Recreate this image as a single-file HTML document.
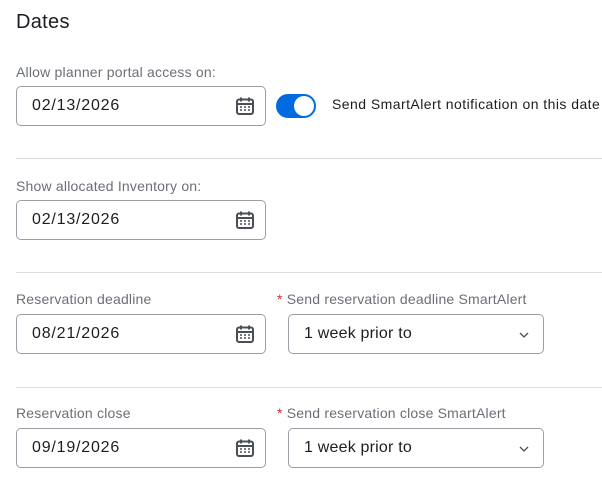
<!DOCTYPE html><html><head><style>
body{margin:0;width:602px;height:486px;background:#fff;font-family:"Liberation Sans",sans-serif;position:relative;overflow:hidden;color:#1a1d21}
.a{position:absolute}
h1{position:absolute;left:16px;top:11px;margin:0;font-size:20px;font-weight:400;color:#1a1d21;letter-spacing:0.3px}
.lbl{position:absolute;font-size:14px;color:#6b6f76;letter-spacing:0.2px}
.in{position:absolute;width:248px;height:38px;border:1px solid #9a9ea5;border-radius:5px;box-sizing:content-box}
.in span{position:absolute;left:15px;top:10px;font-size:16px;letter-spacing:0.8px}
.in svg{position:absolute;right:10px;top:9px}
.sel{position:absolute;width:254px;height:38px;border:1px solid #9a9ea5;border-radius:5px}
.sel span{position:absolute;left:15px;top:10px;font-size:16px;letter-spacing:0.2px}
.sel svg{position:absolute;right:14px;top:17px}
.hr{position:absolute;left:16px;width:586px;height:1px;background:#dcdee2}
.st{color:#d0312d;font-size:14px}
</style></head><body>
<h1>Dates</h1>
<div class="lbl" style="left:16px;top:64px">Allow planner portal access on:</div>
<div class="in" style="left:16px;top:86px"><span>02/13/2026</span><svg width="20" height="20" viewBox="0 0 20 20"><rect x="2" y="3.5" width="16" height="14.5" rx="2" fill="none" stroke="#4a4e55" stroke-width="2"/><path d="M2 8h16M6 1.5v4M14 1.5v4" stroke="#4a4e55" stroke-width="2"/><path d="M5 11h2M9 11h2M13 11h2M5 14h2M9 14h2M13 14h2" stroke="#4a4e55" stroke-width="1.6"/></svg></div>
<div class="a" style="left:276px;top:94px;width:40px;height:24px;border-radius:12px;background:#006ae1"><div class="a" style="left:18px;top:2px;width:20px;height:20px;border-radius:50%;background:#fff"></div></div>
<div class="a" style="left:332px;top:96px;font-size:14px;color:#1a1d21;letter-spacing:0.45px">Send SmartAlert notification on this date</div>
<div class="hr" style="top:158px"></div>
<div class="lbl" style="left:16px;top:178px">Show allocated Inventory on:</div>
<div class="in" style="left:16px;top:200px"><span>02/13/2026</span><svg width="20" height="20" viewBox="0 0 20 20"><rect x="2" y="3.5" width="16" height="14.5" rx="2" fill="none" stroke="#4a4e55" stroke-width="2"/><path d="M2 8h16M6 1.5v4M14 1.5v4" stroke="#4a4e55" stroke-width="2"/><path d="M5 11h2M9 11h2M13 11h2M5 14h2M9 14h2M13 14h2" stroke="#4a4e55" stroke-width="1.6"/></svg></div>
<div class="hr" style="top:272px"></div>
<div class="lbl" style="left:16px;top:291px">Reservation deadline</div>
<div class="lbl" style="left:277px;top:291px"><span class="st">*</span> Send reservation deadline SmartAlert</div>
<div class="in" style="left:16px;top:314px"><span>08/21/2026</span><svg width="20" height="20" viewBox="0 0 20 20"><rect x="2" y="3.5" width="16" height="14.5" rx="2" fill="none" stroke="#4a4e55" stroke-width="2"/><path d="M2 8h16M6 1.5v4M14 1.5v4" stroke="#4a4e55" stroke-width="2"/><path d="M5 11h2M9 11h2M13 11h2M5 14h2M9 14h2M13 14h2" stroke="#4a4e55" stroke-width="1.6"/></svg></div>
<div class="sel" style="left:288px;top:314px"><span>1 week prior to</span><svg width="10" height="6" viewBox="0 0 10 6"><path d="M1 1l4 4 4-4" fill="none" stroke="#4a4e55" stroke-width="1.3"/></svg></div>
<div class="hr" style="top:387px"></div>
<div class="lbl" style="left:16px;top:405px">Reservation close</div>
<div class="lbl" style="left:277px;top:405px"><span class="st">*</span> Send reservation close SmartAlert</div>
<div class="in" style="left:16px;top:428px"><span>09/19/2026</span><svg width="20" height="20" viewBox="0 0 20 20"><rect x="2" y="3.5" width="16" height="14.5" rx="2" fill="none" stroke="#4a4e55" stroke-width="2"/><path d="M2 8h16M6 1.5v4M14 1.5v4" stroke="#4a4e55" stroke-width="2"/><path d="M5 11h2M9 11h2M13 11h2M5 14h2M9 14h2M13 14h2" stroke="#4a4e55" stroke-width="1.6"/></svg></div>
<div class="sel" style="left:288px;top:428px"><span>1 week prior to</span><svg width="10" height="6" viewBox="0 0 10 6"><path d="M1 1l4 4 4-4" fill="none" stroke="#4a4e55" stroke-width="1.3"/></svg></div>
</body></html>
